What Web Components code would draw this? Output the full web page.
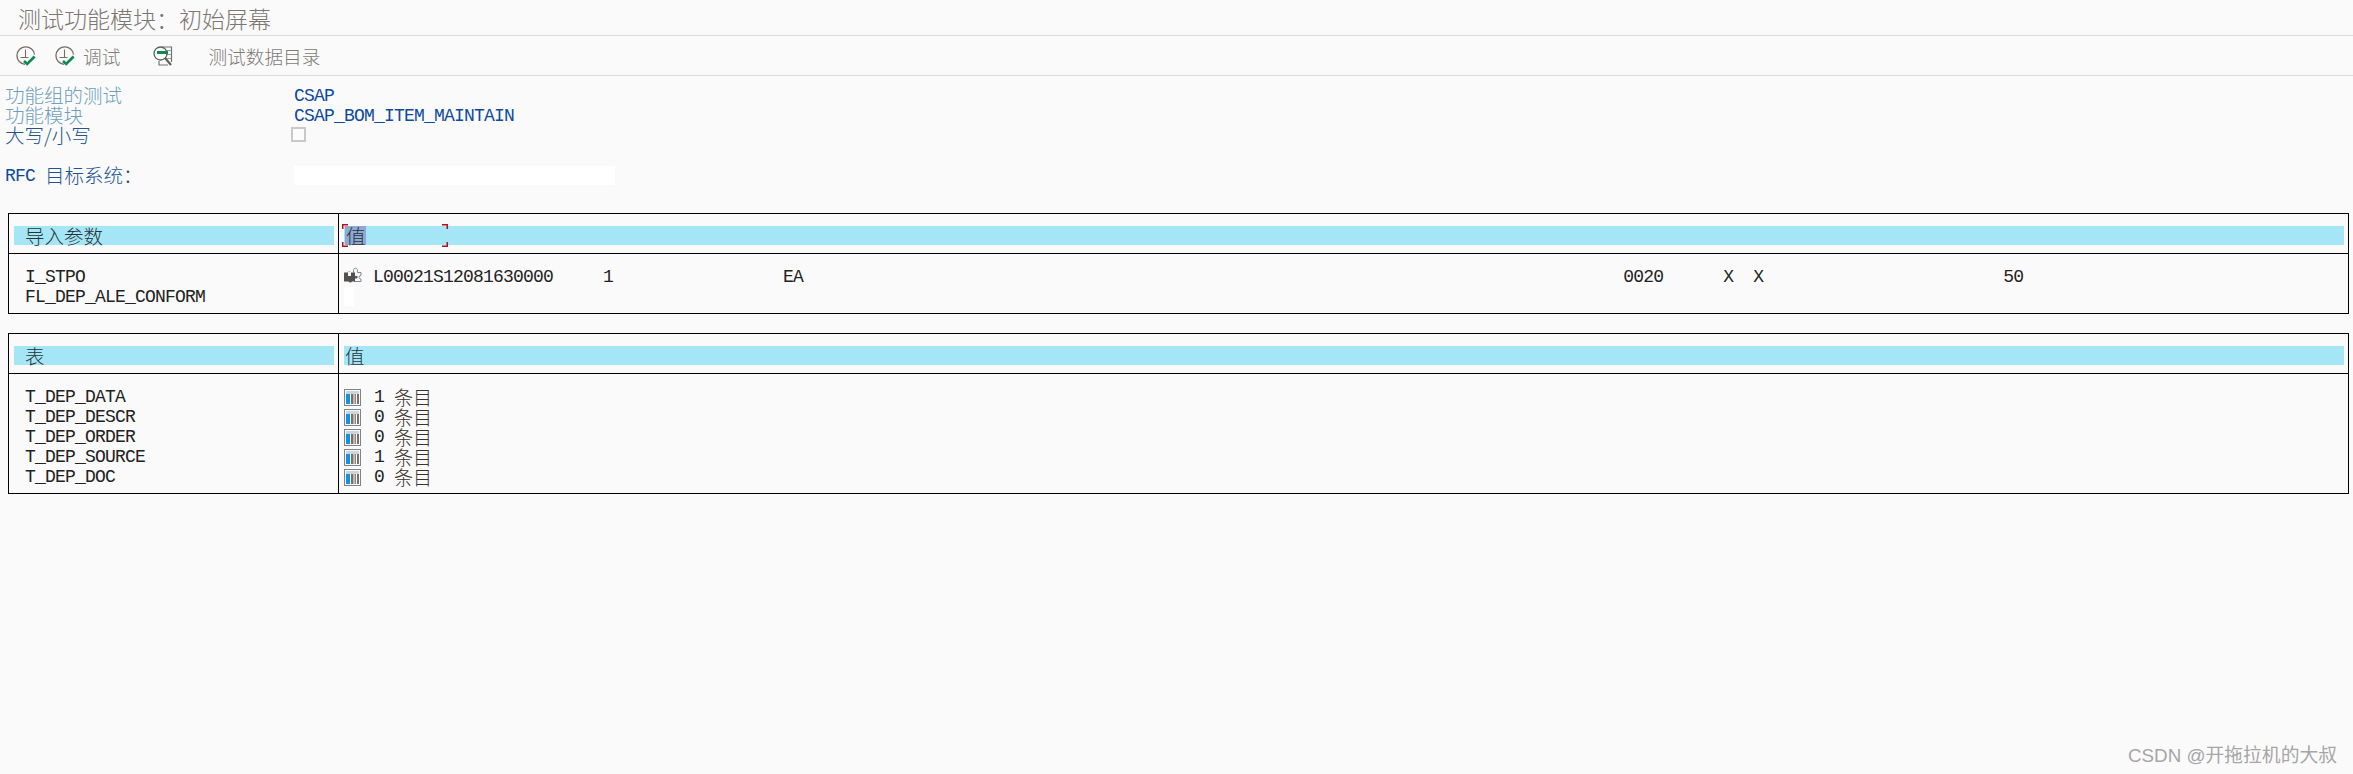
<!DOCTYPE html>
<html>
<head>
<meta charset="utf-8">
<title>测试功能模块</title>
<style>
    html, body {
        margin: 0;
        height: 100%;
        background: #fafafa;
    }

    body {
        position: relative;
        width: 2353px;
        height: 774px;
        overflow: hidden;
        font-family: "Liberation Mono", "Noto Sans CJK SC", monospace;
        font-size: 18px;
        letter-spacing: -0.8px;
        color: #222;
    }
</style>
</head>
<body>

<sap-title>测试功能模块：初始屏幕</sap-title>

<sap-toolbar>
    <sap-tool icon="run" gap="18"></sap-tool>
    <sap-tool icon="run" gap="33" label="调试"></sap-tool>
    <sap-tool icon="dir" gap="35"></sap-tool>
    <sap-tool label="测试数据目录"></sap-tool>
</sap-toolbar>

<sap-form>
    <sap-field label="功能组的测试" tone="soft">CSAP</sap-field>
    <sap-field label="功能模块" tone="soft">CSAP_BOM_ITEM_MAINTAIN</sap-field>
    <sap-field label="大写/小写"><sap-check></sap-check></sap-field>
    <sap-field latin="RFC" label="目标系统：" style="margin-top:20px"><sap-input></sap-input></sap-field>
</sap-form>

<sap-table head="导入参数" style="margin-top:28px">
    <sap-cursor slot="value-head">值</sap-cursor>
    <sap-line slot="keys">I_STPO</sap-line>
    <sap-line slot="keys">FL_DEP_ALE_CONFORM</sap-line>
    <sap-struct slot="values">L00021S12081630000     1                 EA                                                                                  0020      X  X                        50</sap-struct>
    <sap-box slot="values"></sap-box>
</sap-table>

<sap-table head="表" style="margin-top:19px">
    <span slot="value-head">值</span>
    <sap-line slot="keys">T_DEP_DATA</sap-line>
    <sap-line slot="keys">T_DEP_DESCR</sap-line>
    <sap-line slot="keys">T_DEP_ORDER</sap-line>
    <sap-line slot="keys">T_DEP_SOURCE</sap-line>
    <sap-line slot="keys">T_DEP_DOC</sap-line>
    <sap-entries slot="values" count="1"></sap-entries>
    <sap-entries slot="values" count="0"></sap-entries>
    <sap-entries slot="values" count="0"></sap-entries>
    <sap-entries slot="values" count="1"></sap-entries>
    <sap-entries slot="values" count="0"></sap-entries>
</sap-table>

<sap-watermark>CSDN @开拖拉机的大叔</sap-watermark>

<script>
const CJK = '"Noto Sans CJK SC", sans-serif';

const ICONS = {
    run: `<svg width="21" height="20" viewBox="0 0 21 20" fill="none">
            <path d="M10 18.400A8.800 8.800 0 1 1 19.500 8.500" stroke="#766c66" stroke-width="1.300"/>
            <path d="M10.500 3.500v7.500M5.500 11.500h8" stroke="#766c66" stroke-width="1.100"/>
            <path d="M9 15l3.200 3L19.600 10.500" stroke="#0b8a4c" stroke-width="2.600"/>
          </svg>`,
    dir: `<svg width="20" height="21" viewBox="0 0 20 21" fill="none">
            <path d="M9 1h9.500v15M6 15v4h9" stroke="#6f7478" stroke-width="1.200"/>
            <path d="M13 4.500h5M13 8.500h5M13 12.500h5" stroke="#8fa0a6" stroke-width="1"/>
            <circle cx="7.500" cy="7.500" r="6.500" fill="#fafafa" stroke="#5f5f5f" stroke-width="1.300"/>
            <path d="M4 6.500h11" stroke="#0b8a4c" stroke-width="3"/>
            <path d="M12 12l6 7" stroke="#5f5f5f" stroke-width="2.200"/>
          </svg>`,
    puzzle: `<svg width="18" height="18" viewBox="0 0 18 18" fill="none">
            <path d="M9.500 5.500V3.500a2 2 0 0 1 3 -2a2 2 0 0 1 1 2V5.500h3.500v3a2 2 0 0 0 -2 2a2 2 0 0 0 2 1.500V14.500H10" fill="#f4f6f8" stroke="#7d8a96"/>
            <path d="M0 5.500h3.500a2 2 0 0 1 3.500 0h4V9h2v2.500h-2V14.500H8a2 2 0 0 1 -3.500 0H0z" fill="#55504e"/>
            <path d="M4 5v4h3V5z" fill="#f4f6f8"/>
            <path d="M14 10h-3" stroke="#3d6fa8"/>
          </svg>`,
    grid: `<svg width="17" height="17" viewBox="0 0 17 17">
            <rect x=".500" y=".500" width="16" height="16" fill="#f6f8fa" stroke="#7d8589"/>
            <rect x="2" y="2" width="13" height="3" fill="#cfd6da"/>
            <rect x="2" y="5" width="4" height="10" fill="#1590e4"/>
            <rect x="7" y="5" width="2.500" height="10" fill="#7c6f68"/>
            <rect x="10.500" y="5" width="1.500" height="10" fill="#8a8682"/>
            <rect x="13" y="5" width="2" height="10" fill="#7c6f68"/>
          </svg>`
};

class SapTitle extends HTMLElement {
    constructor() {
        super();
        this.attachShadow({mode: 'open'}).innerHTML = `
        <style>
            :host {
                display: flex;
                align-items: center;
                box-sizing: border-box;
                height: 36px;
                padding-left: 18px;
                border-bottom: 1px solid #dcdcdc;
                font: 300 23px ${CJK};
                letter-spacing: 0;
                color: #7d7771;
            }
        </style>
        <slot></slot>`;
    }
}

class SapToolbar extends HTMLElement {
    constructor() {
        super();
        this.attachShadow({mode: 'open'}).innerHTML = `
        <style>
            :host {
                display: flex;
                align-items: center;
                box-sizing: border-box;
                height: 40px;
                padding: 1px 0 0 15px;
                border-bottom: 1px solid #dcdcdc;
            }
        </style>
        <slot></slot>`;
    }
}

class SapTool extends HTMLElement {
    constructor() {
        super();
        const icon = this.getAttribute('icon');
        const label = this.getAttribute('label');
        this.attachShadow({mode: 'open'}).innerHTML = `
        <style>
            :host {
                display: flex;
                align-items: center;
                gap: 8px;
                margin-right: ${this.getAttribute('gap') || 0}px;
                font: 300 18.700px/20px ${CJK};
                letter-spacing: 0;
                color: #807b76;
            }
            svg { display: block; }
        </style>
        ${icon ? ICONS[icon] : ''}${label ? `<span>${label}</span>` : ''}`;
    }
}

class SapForm extends HTMLElement {
    constructor() {
        super();
        this.attachShadow({mode: 'open'}).innerHTML = `
        <style>
            :host {
                display: block;
                padding: 9px 0 0 5px;
            }
        </style>
        <slot></slot>`;
    }
}

class SapField extends HTMLElement {
    constructor() {
        super();
        const soft = this.getAttribute('tone') === 'soft';
        const latin = this.getAttribute('latin');
        this.attachShadow({mode: 'open'}).innerHTML = `
        <style>
            :host {
                display: grid;
                grid-template-columns: 289px 1fr;
                height: 20px;
                color: #0f4a9c;
            }
            .label {
                display: flex;
                align-items: center;
                height: 20px;
                font: 300 19.500px/20px ${CJK};
                letter-spacing: 0;
                white-space: nowrap;
                color: ${soft ? '#6f9fbc' : '#22558f'};
            }
            .latin {
                width: 40px;
                padding-top: 2px;
                font: 18px/20px "Liberation Mono", monospace;
                letter-spacing: -0.8px;
                color: #0f4a9c;
            }
            .value {
                height: 20px;
                line-height: 22px;
            }
        </style>
        <div class="label">${latin ? `<span class="latin">${latin}</span>` : ''}${this.getAttribute('label')}</div>
        <div class="value"><slot></slot></div>`;
    }
}

class SapCheck extends HTMLElement {
    constructor() {
        super();
        this.attachShadow({mode: 'open'}).innerHTML = `
        <style>
            :host {
                display: block;
                box-sizing: border-box;
                width: 15px;
                height: 15px;
                margin: 2px 0 0 -3px;
                background: #fcfcfc;
                border: 2px solid #c9c9c9;
            }
        </style>`;
    }
}

class SapInput extends HTMLElement {
    constructor() {
        super();
        this.attachShadow({mode: 'open'}).innerHTML = `
        <style>
            :host {
                display: block;
                width: 321px;
                height: 19px;
                margin-top: 1px;
                background: #fff;
            }
        </style>`;
    }
}

class SapTable extends HTMLElement {
    constructor() {
        super();
        this.attachShadow({mode: 'open'}).innerHTML = `
        <style>
            :host {
                display: grid;
                grid-template-columns: 330px minmax(0, 1fr);
                box-sizing: border-box;
                width: 2341px;
                margin-left: 8px;
                border: 1px solid #000;
            }
            .head {
                height: 40px;
                box-sizing: border-box;
                padding: 12px 4px 0 5px;
                border-bottom: 1px solid #000;
            }
            .left { border-right: 1px solid #000; }
            .bar {
                display: flex;
                height: 19px;
                background: #a5e6f6;
                font: 300 19.500px/19px ${CJK};
                letter-spacing: 0;
                color: #26343a;
            }
            .left .bar { padding-left: 11px; }
            .right .bar { padding-left: 1px; }
            .keys, .values { padding: 13px 0 6px; }
            .keys { padding-left: 16px; }
            .values { padding-left: 5px; }
        </style>
        <div class="head left"><div class="bar">${this.getAttribute('head')}</div></div>
        <div class="head right"><div class="bar"><slot name="value-head"></slot></div></div>
        <div class="keys left"><slot name="keys"></slot></div>
        <div class="values"><slot name="values"></slot></div>`;
    }
}

class SapCursor extends HTMLElement {
    constructor() {
        super();
        this.attachShadow({mode: 'open'}).innerHTML = `
        <style>
            :host {
                display: block;
                position: relative;
                width: 21px;
                padding-left: 1px;
                box-sizing: border-box;
                background: #8fa9d2;
            }
            svg {
                position: absolute;
                left: -3px;
                top: -2px;
            }
        </style>
        <slot></slot>
        <svg width="106" height="23" fill="none" stroke="#b5111c" stroke-width="1.500">
            <path d="M6 .750H.750V5M.750 18V22.250H6M100 .750h5.250V5M105.250 18v4.250H100"/>
        </svg>`;
    }
}

class SapLine extends HTMLElement {
    constructor() {
        super();
        this.attachShadow({mode: 'open'}).innerHTML = `<style>
            :host {
                display: block;
                height: 20px;
                line-height: 20px;
                white-space: nowrap;
            }
        </style><slot></slot>`;
    }
}

class SapStruct extends HTMLElement {
    constructor() {
        super();
        this.attachShadow({mode: 'open'}).innerHTML = `
        <style>
            :host {
                display: flex;
                align-items: center;
                gap: 11px;
                height: 20px;
                line-height: 20px;
            }
            svg { display: block; flex: none; margin-top: -3px; }
            span { white-space: pre; }
        </style>
        ${ICONS.puzzle}<span><slot></slot></span>`;
    }
}

class SapBox extends HTMLElement {
    constructor() {
        super();
        this.attachShadow({mode: 'open'}).innerHTML = `
        <style>
            :host {
                display: block;
                width: 10px;
                height: 19px;
                background: #fff;
            }
        </style>`;
    }
}

class SapEntries extends HTMLElement {
    constructor() {
        super();
        this.attachShadow({mode: 'open'}).innerHTML = `
        <style>
            :host {
                display: flex;
                align-items: center;
                height: 20px;
                line-height: 20px;
            }
            svg { display: block; margin-right: 13px; }
            .count { width: 20px; }
            .unit {
                font: 300 19px/20px ${CJK};
                letter-spacing: 0;
                color: #3a332c;
            }
        </style>
        ${ICONS.grid}<span class="count">${this.getAttribute('count')}</span><span class="unit">条目</span>`;
    }
}

class SapWatermark extends HTMLElement {
    constructor() {
        super();
        this.attachShadow({mode: 'open'}).innerHTML = `
        <style>
            :host {
                position: absolute;
                right: 16px;
                top: 744px;
                font: 18.800px/24px "Liberation Sans", ${CJK};
                letter-spacing: 0;
                white-space: nowrap;
                color: #a6a6a6;
            }
        </style>
        <slot></slot>`;
    }
}

customElements.define('sap-title', SapTitle);
customElements.define('sap-toolbar', SapToolbar);
customElements.define('sap-tool', SapTool);
customElements.define('sap-form', SapForm);
customElements.define('sap-field', SapField);
customElements.define('sap-check', SapCheck);
customElements.define('sap-input', SapInput);
customElements.define('sap-table', SapTable);
customElements.define('sap-cursor', SapCursor);
customElements.define('sap-line', SapLine);
customElements.define('sap-struct', SapStruct);
customElements.define('sap-box', SapBox);
customElements.define('sap-entries', SapEntries);
customElements.define('sap-watermark', SapWatermark);
</script>
</body>
</html>
